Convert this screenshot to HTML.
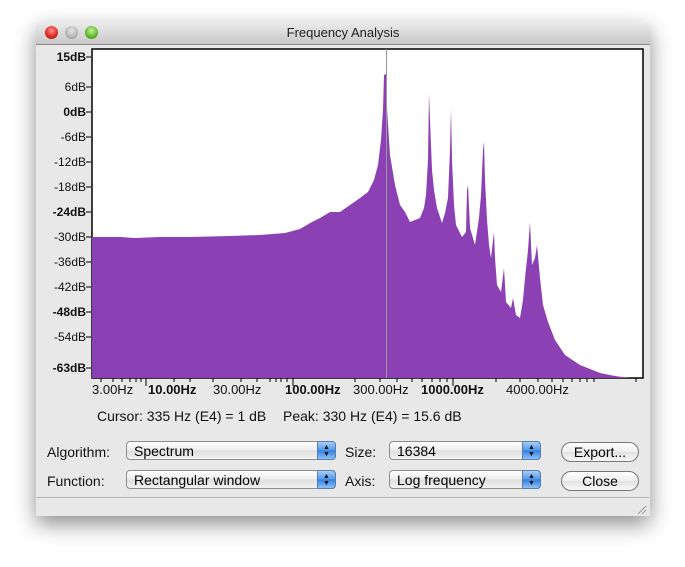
<!DOCTYPE html>
<html><head><style>
body{margin:0;width:685px;height:567px;background:#fff;position:relative;overflow:hidden;font-family:"Liberation Sans",sans-serif;}
.win{position:absolute;left:36px;top:22px;width:614px;height:494px;background:#e8e8e8;box-shadow:0 8px 22px rgba(0,0,0,.45);border-radius:5px 5px 0 0;overflow:hidden}
.tb{position:absolute;left:0;top:0;width:100%;height:22px;background:linear-gradient(#ececec,#c8c8c8);border-bottom:1px solid #8a8a8a;text-align:center;font-size:13px;line-height:22px;color:#222}
.dot{position:absolute;top:4px;width:13px;height:13px;border-radius:50%}
.t{position:absolute;font-size:13px;color:#111;white-space:nowrap}
.b{font-weight:bold}
.yl{position:absolute;font-size:12px;color:#111;text-align:right}
.pop{position:absolute;height:19px;border:1px solid #8d8d8d;border-radius:4px;background:linear-gradient(#fff,#ececec 50%,#dedede 51%,#f2f2f2);font-size:14px;line-height:18px;padding-left:7px;box-sizing:border-box}
.pop .ar{position:absolute;right:-1px;top:-1px;width:19px;height:19px;border-radius:0 4px 4px 0;background:linear-gradient(#a9cdf6,#4d95e8 50%,#2f7fe0 51%,#8ec2f6);border:1px solid #5a7eae;box-sizing:border-box;color:#111;font-size:7px;line-height:7px;text-align:center;padding-top:2px}
.btn{position:absolute;height:20px;border:1px solid #777;border-radius:10px;background:linear-gradient(#fff,#eee 50%,#e2e2e2 51%,#f8f8f8);font-size:14px;line-height:19px;text-align:center;box-sizing:border-box}
</style></head><body>
<div class="win">
<div class="tb">Frequency Analysis
<div class="dot" style="left:9px;background:radial-gradient(circle at 50% 35%,#ff8f8a,#d9261f 60%,#8f100c)"></div>
<div class="dot" style="left:29px;background:radial-gradient(circle at 50% 35%,#e8e8e8,#b4b4b4 60%,#888)"></div>
<div class="dot" style="left:49px;background:radial-gradient(circle at 50% 35%,#c8f49a,#5db52a 60%,#2f7a10)"></div>
</div>
</div>
<div class="yl b" style="top:50px;left:40px;width:46px">15dB</div>
<div class="yl" style="top:80px;left:40px;width:46px">6dB</div>
<div class="yl b" style="top:105px;left:40px;width:46px">0dB</div>
<div class="yl" style="top:130px;left:40px;width:46px">-6dB</div>
<div class="yl" style="top:155px;left:40px;width:46px">-12dB</div>
<div class="yl" style="top:180px;left:40px;width:46px">-18dB</div>
<div class="yl b" style="top:205px;left:40px;width:46px">-24dB</div>
<div class="yl" style="top:230px;left:40px;width:46px">-30dB</div>
<div class="yl" style="top:255px;left:40px;width:46px">-36dB</div>
<div class="yl" style="top:280px;left:40px;width:46px">-42dB</div>
<div class="yl b" style="top:305px;left:40px;width:46px">-48dB</div>
<div class="yl" style="top:330px;left:40px;width:46px">-54dB</div>
<div class="yl b" style="top:361px;left:40px;width:46px">-63dB</div>
<svg style="position:absolute;left:0;top:0" width="685" height="567">
<rect x="92" y="49" width="551" height="329" fill="#fff" stroke="#000" stroke-width="1.5"/>
<polygon fill="#8b40b3" points="92,378 92,237 120,237 135,238 160,237 190,237 230,236 260,235 285,233 300,229 312,222 320,218 330,212 340,212 350,205 360,198 368,192 374,180 378,165 381,140 383,110 384,75 386,74 387,108 390,155 395,185 400,205 405,212 410,222 415,220 420,218 424,208 426,195 428,160 429,93 430,120 432,170 434,190 437,208 442,223 445,213 448,198 450,150 451,108 452,160 454,205 456,225 462,237 466,232 467,190 468,185 470,228 475,245 479,218 481,195 483,150 484,142 485,180 487,220 489,245 491,258 494,232 495,258 497,285 501,292 504,268 506,302 511,308 513,298 516,315 520,318 523,300 525,278 528,250 530,222 532,265 535,258 537,245 540,278 543,305 548,322 555,340 565,355 580,365 600,373 615,376 630,378 632,378"/>
<line x1="386.5" y1="49" x2="386.5" y2="378" stroke="#999" stroke-width="1"/>
<g stroke="#000" stroke-width="1">
<line x1="86" y1="57" x2="91" y2="57"/><line x1="86" y1="87" x2="91" y2="87"/><line x1="86" y1="112" x2="91" y2="112"/><line x1="86" y1="137" x2="91" y2="137"/><line x1="86" y1="162" x2="91" y2="162"/><line x1="86" y1="187" x2="91" y2="187"/><line x1="86" y1="212" x2="91" y2="212"/><line x1="86" y1="237" x2="91" y2="237"/><line x1="86" y1="262" x2="91" y2="262"/><line x1="86" y1="287" x2="91" y2="287"/><line x1="86" y1="312" x2="91" y2="312"/><line x1="86" y1="337" x2="91" y2="337"/><line x1="86" y1="368" x2="91" y2="368"/>
<line x1="101" y1="378" x2="101" y2="382"/><line x1="113" y1="378" x2="113" y2="382"/><line x1="122" y1="378" x2="122" y2="382"/><line x1="130" y1="378" x2="130" y2="382"/><line x1="136" y1="378" x2="136" y2="382"/><line x1="141" y1="378" x2="141" y2="382"/><line x1="146" y1="378" x2="146" y2="386"/><line x1="174" y1="378" x2="174" y2="382"/><line x1="190" y1="378" x2="190" y2="382"/><line x1="213" y1="378" x2="213" y2="382"/><line x1="241" y1="378" x2="241" y2="382"/><line x1="257" y1="378" x2="257" y2="382"/><line x1="270" y1="378" x2="270" y2="382"/><line x1="276" y1="378" x2="276" y2="382"/><line x1="281" y1="378" x2="281" y2="382"/><line x1="287" y1="378" x2="287" y2="382"/><line x1="293" y1="378" x2="293" y2="386"/><line x1="355" y1="378" x2="355" y2="382"/><line x1="380" y1="378" x2="380" y2="382"/><line x1="397" y1="378" x2="397" y2="382"/><line x1="412" y1="378" x2="412" y2="382"/><line x1="422" y1="378" x2="422" y2="382"/><line x1="432" y1="378" x2="432" y2="382"/><line x1="440" y1="378" x2="440" y2="382"/><line x1="447" y1="378" x2="447" y2="382"/><line x1="453" y1="378" x2="453" y2="386"/><line x1="496" y1="378" x2="496" y2="382"/><line x1="520" y1="378" x2="520" y2="382"/><line x1="538" y1="378" x2="538" y2="382"/><line x1="552" y1="378" x2="552" y2="382"/><line x1="563" y1="378" x2="563" y2="382"/><line x1="572" y1="378" x2="572" y2="382"/><line x1="580" y1="378" x2="580" y2="382"/><line x1="587" y1="378" x2="587" y2="382"/><line x1="594" y1="378" x2="594" y2="382"/><line x1="636" y1="378" x2="636" y2="382"/>
</g>
<line x1="37" y1="497.5" x2="649" y2="497.5" stroke="#b5b5b5"/>
<g stroke="#999"><line x1="638" y1="514" x2="646" y2="506"/><line x1="642" y1="514" x2="646" y2="510"/></g>
</svg>
<div class="t" style="left:92px;top:382px">3.00Hz</div>
<div class="t b" style="left:148px;top:382px">10.00Hz</div>
<div class="t" style="left:213px;top:382px">30.00Hz</div>
<div class="t b" style="left:285px;top:382px">100.00Hz</div>
<div class="t" style="left:353px;top:382px">300.00Hz</div>
<div class="t b" style="left:421px;top:382px">1000.00Hz</div>
<div class="t" style="left:506px;top:382px">4000.00Hz</div>
<div class="t" style="left:97px;top:408px;font-size:14px">Cursor: 335 Hz (E4) = 1 dB</div>
<div class="t" style="left:283px;top:408px;font-size:14px">Peak: 330 Hz (E4) = 15.6 dB</div>
<div class="t" style="left:47px;top:444px;font-size:14px">Algorithm:</div>
<div class="t" style="left:47px;top:473px;font-size:14px">Function:</div>
<div class="t" style="left:345px;top:444px;font-size:14px">Size:</div>
<div class="t" style="left:345px;top:473px;font-size:14px">Axis:</div>
<div class="pop" style="left:126px;top:441px;width:210px">Spectrum<div class="ar">▲<br>▼</div></div>
<div class="pop" style="left:126px;top:470px;width:210px">Rectangular window<div class="ar">▲<br>▼</div></div>
<div class="pop" style="left:389px;top:441px;width:152px">16384<div class="ar">▲<br>▼</div></div>
<div class="pop" style="left:389px;top:470px;width:152px">Log frequency<div class="ar">▲<br>▼</div></div>
<div class="btn" style="left:561px;top:442px;width:78px">Export...</div>
<div class="btn" style="left:561px;top:471px;width:78px">Close</div>
</body></html>
